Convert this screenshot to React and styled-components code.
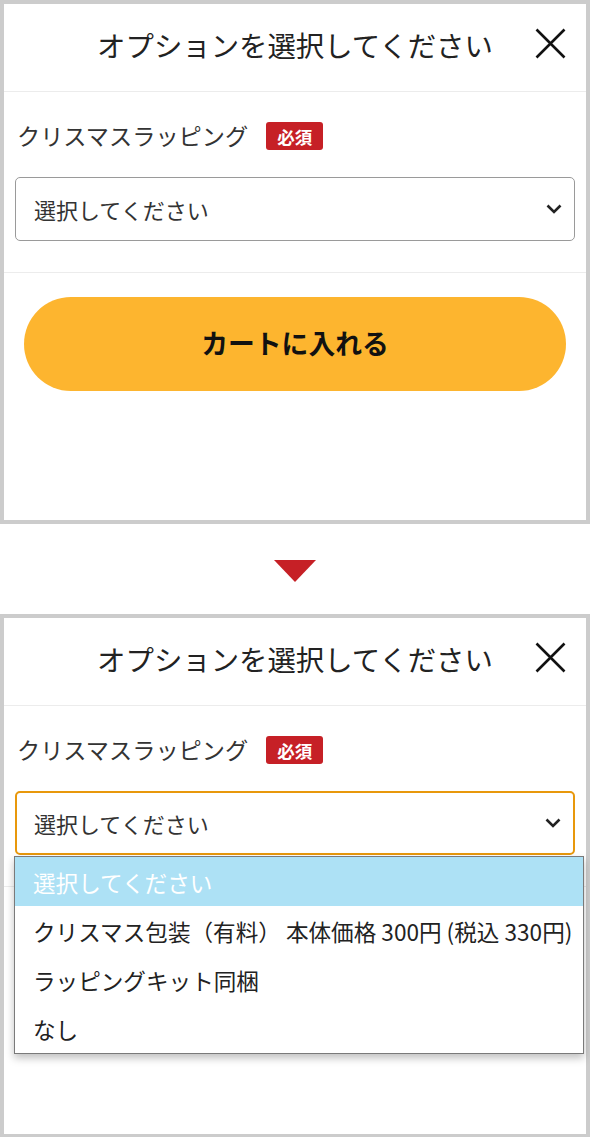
import React from 'react';
import styled, { createGlobalStyle } from 'styled-components';

const GlobalStyle = createGlobalStyle`
    html, body {
        margin: 0;
        padding: 0;
        background: #ffffff;
    }
    body {
        font-family: "Noto Sans CJK JP", "Noto Sans", sans-serif;
        color: #222222;
    }
`;

const PageSC = styled.div`
    width: 590px;
    display: flex;
    flex-direction: column;
`;

const PanelSC = styled.div`
    box-sizing: border-box;
    width: 590px;
    height: 524px;
    border: 4px solid #cccccc;
    background: #ffffff;
    display: flex;
    flex-direction: column;
`;

const HeaderSC = styled.div`
    position: relative;
    height: 88px;
    padding-bottom: 4px;
    box-sizing: border-box;
    border-bottom: 1px solid #ececec;
    display: flex;
    align-items: center;
    justify-content: center;
`;

const TitleSC = styled.p`
    margin: 0;
    font-size: 28.4px;
    line-height: 1;
    font-weight: normal;
    color: #222222;
`;

const CloseSC = styled.button`
    position: absolute;
    right: 16px;
    top: 19px;
    width: 40px;
    height: 40px;
    padding: 0;
    border: none;
    background: none;
    display: flex;
    align-items: center;
    justify-content: center;
`;

const BodySC = styled.div`
    padding: 29px 11px 31px;
    border-bottom: 1px solid #ececec;
    display: flex;
    flex-direction: column;
    gap: 26px;
`;

const LabelRowSC = styled.div`
    height: 30px;
    padding-left: 2px;
    display: flex;
    align-items: center;
    gap: 18px;
`;

const LabelSC = styled.span`
    font-size: 23.2px;
    color: #333333;
    line-height: 1;
`;

const BadgeSC = styled.span`
    box-sizing: border-box;
    height: 28px;
    padding: 0 11px;
    border-radius: 3px;
    background: #c62026;
    color: #ffffff;
    font-size: 17.5px;
    font-weight: bold;
    display: flex;
    align-items: center;
`;

const SelectWrapSC = styled.div`
    position: relative;
`;

const SelectBoxSC = styled.div`
    box-sizing: border-box;
    height: 64px;
    padding: 0 12px 0 ${({ $focused }) => ($focused ? '17px' : '18px')};
    border: ${({ $focused }) => ($focused ? '2px solid #e8980c' : '1px solid #9a9a9a')};
    border-radius: 5px;
    display: flex;
    align-items: center;
    justify-content: space-between;
    font-size: 22px;
    color: #333333;
`;

const DropdownSC = styled.ul`
    position: absolute;
    top: calc(100% + 1px);
    left: -1px;
    right: -9px;
    margin: 0;
    padding: 0;
    list-style: none;
    background: #ffffff;
    border: 1px solid #7a7a7a;
    box-shadow: 0 4px 8px rgba(0, 0, 0, 0.25);
    z-index: 2;
`;

const OptionSC = styled.li`
    height: 49px;
    padding: 2px 0 0 18px;
    box-sizing: border-box;
    display: flex;
    align-items: center;
    white-space: nowrap;
    overflow: hidden;
    font-size: 22.6px;
    color: ${({ $active }) => ($active ? '#ffffff' : '#222222')};
    background: ${({ $active }) => ($active ? '#ade1f5' : 'transparent')};
`;

const FooterSC = styled.div`
    padding: 24px 20px;
    visibility: ${({ $covered }) => ($covered ? 'hidden' : 'visible')};
`;

const CartButtonSC = styled.button`
    width: 100%;
    height: 94px;
    padding: 0 0 4px;
    border: none;
    border-radius: 47px;
    background: #fdb52f;
    color: #111111;
    font-family: "Noto Sans CJK JP", "Noto Sans", sans-serif;
    font-size: 26.8px;
    font-weight: bold;
`;

const ArrowRowSC = styled.div`
    height: 90px;
    display: flex;
    align-items: flex-start;
    justify-content: center;
    padding-top: 36px;
    box-sizing: border-box;
`;

const ArrowSC = styled.div`
    width: 0;
    height: 0;
    border-left: 21px solid transparent;
    border-right: 21px solid transparent;
    border-top: 22px solid #c62026;
`;

const OPTIONS = [
    '選択してください',
    'クリスマス包装（有料） 本体価格 300円 (税込 330円)',
    'ラッピングキット同梱',
    'なし',
];

const CloseIcon = () => (
    <svg width="31" height="31" viewBox="0 0 31 31">
        <path d="M1.5 1.5 L29.5 29.5 M29.5 1.5 L1.5 29.5" stroke="#111" strokeWidth="2.6" fill="none" />
    </svg>
);

const Chevron = () => (
    <svg width="16" height="10" viewBox="0 0 16 10">
        <path d="M1.5 1.5 L8 8 L14.5 1.5" stroke="#222" strokeWidth="2.6" fill="none" />
    </svg>
);

const OptionPanel = ({ open }) => (
    <PanelSC>
        <HeaderSC>
            <TitleSC>オプションを選択してください</TitleSC>
            <CloseSC aria-label="close">
                <CloseIcon />
            </CloseSC>
        </HeaderSC>

        <BodySC>
            <LabelRowSC>
                <LabelSC>クリスマスラッピング</LabelSC>
                <BadgeSC>必須</BadgeSC>
            </LabelRowSC>

            <SelectWrapSC>
                <SelectBoxSC $focused={open}>
                    <span>選択してください</span>
                    <Chevron />
                </SelectBoxSC>

                {open && (
                    <DropdownSC>
                        {OPTIONS.map((o, i) => (
                            <OptionSC key={o} $active={i === 0}>{o}</OptionSC>
                        ))}
                    </DropdownSC>
                )}
            </SelectWrapSC>
        </BodySC>

        {/* with the list open, the button sits under it */}
        <FooterSC $covered={open}>
            <CartButtonSC>カートに入れる</CartButtonSC>
        </FooterSC>
    </PanelSC>
);

const App = () => {
    return (
        <>
            <GlobalStyle />
            <PageSC>
                <OptionPanel open={false} />
                <ArrowRowSC>
                    <ArrowSC />
                </ArrowRowSC>
                <OptionPanel open />
            </PageSC>
        </>
    );
};

export default App;
